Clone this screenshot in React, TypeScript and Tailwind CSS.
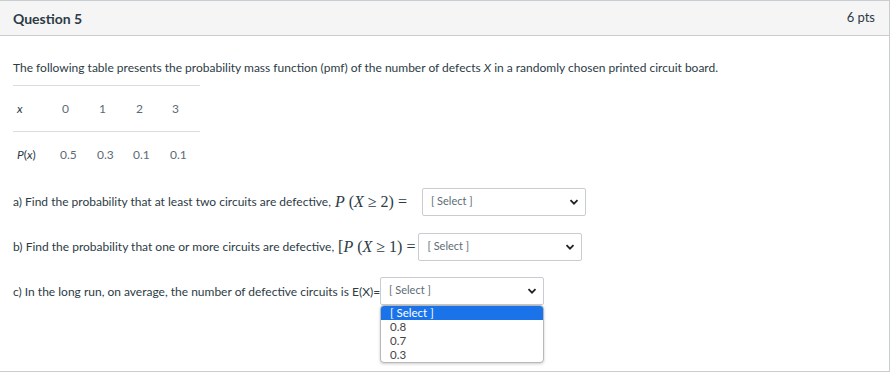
import React from 'react';

const Chevron: React.FC = () => (
    <svg width="10" height="10" viewBox="0 0 10 10" className="shrink-0">
        <path d="M1.5 3.2 L5 6.7 L8.5 3.2" fill="none" stroke="#222" strokeWidth="1.8" />
    </svg>
);

const SelectBox: React.FC<{ width: string }> = ({ width }) => (
    <div className={`${width} h-[28px] flex items-center justify-between pl-[8px] pr-[6px] bg-white border border-[#c7cdd1] rounded-[2px]`}>
        <span className="text-[11px] text-[#5c6b75]">[ Select ]</span>
        <Chevron />
    </div>
);

const MathExpr: React.FC<{ n: string; bracket?: boolean }> = ({ n, bracket }) => (
    <span className="font-['Liberation_Serif',serif] text-[16px] text-[#2d3b45] mx-[4px] whitespace-nowrap">
        {bracket && '['}<i>P</i> (<i>X</i> ≥ {n}) =
    </span>
);

export default function App() {
    return (
        <div className="w-[894px] h-[375px] bg-white font-['Lato','Open_Sans',sans-serif] text-[#2d3b45]">
            <div className="w-[890px] h-[372px] border-t border-r border-b border-[#c7cdd1] flex flex-col">
                <header className="h-[35px] bg-[#f5f5f5] border-b border-[#c7cdd1] flex items-center justify-between pl-[13px] pr-[14px]">
                    <h2 className="text-[14px] font-bold">Question 5</h2>
                    <span className="text-[13px]">6 pts</span>
                </header>

                <div className="pl-[13px] pt-[23px] text-[12px]">
                    <p>
                        The following table presents the probability mass function (pmf) of the number of defects <i>X</i> in a randomly chosen printed circuit board.
                    </p>

                    <table className="mt-[8px] w-[187px] border-t border-[#d9dde0] text-[12px]">
                        <tbody>
                            <tr className="h-[46px] border-b border-[#d9dde0]">
                                <td className="pl-[4px] w-[47px]"><i>x</i></td>
                                <td className="w-[37px] pl-[2px] text-[#5c6b75]">0</td>
                                <td className="w-[36px] pl-[2px] text-[#5c6b75]">1</td>
                                <td className="w-[37px] pl-[3px] text-[#5c6b75]">2</td>
                                <td className="pl-[2px] text-[#5c6b75]">3</td>
                            </tr>
                            <tr className="h-[46px]">
                                <td className="pl-[4px]"><i>P</i>(<i>x</i>)</td>
                                <td className="text-[#5c6b75]">0.5</td>
                                <td className="text-[#5c6b75]">0.3</td>
                                <td className="text-[#5c6b75]">0.1</td>
                                <td className="text-[#5c6b75]">0.1</td>
                            </tr>
                        </tbody>
                    </table>

                    <div className="mt-[10px] flex items-center">
                        <span>a) Find the probability that at least two circuits are defective,</span>
                        <MathExpr n="2" />
                        <span className="ml-[11px]"><SelectBox width="w-[164px]" /></span>
                    </div>

                    <div className="mt-[17px] flex items-center">
                        <span>b) Find the probability that one or more circuits are defective,</span>
                        <MathExpr n="1" bracket />
                        <span className="-ml-[1px]"><SelectBox width="w-[164px]" /></span>
                    </div>

                    <div className="mt-[16px] flex items-start">
                        <span className="mt-[6px]">c) In the long run, on average, the number of defective circuits is E(X)=</span>
                        <div className="relative">
                            <SelectBox width="w-[164px]" />
                            <div className="absolute left-0 top-[28px] w-[164px] bg-white border border-[#b8b8b8] rounded-[4px] shadow-[0_1px_3px_rgba(0,0,0,0.2)] overflow-hidden text-[11.5px] leading-[14px] text-[#444]">
                                <div className="bg-[#1a73e8] text-white pl-[9px]">[ Select ]</div>
                                <div className="pl-[9px]">0.8</div>
                                <div className="pl-[9px]">0.7</div>
                                <div className="pl-[9px]">0.3</div>
                            </div>
                        </div>
                    </div>
                </div>
            </div>
        </div>
    );
}
